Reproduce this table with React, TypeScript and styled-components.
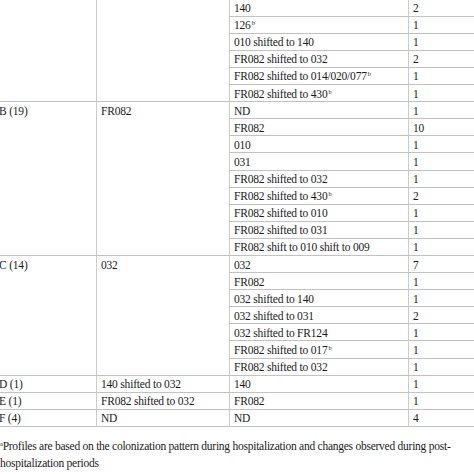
import styled, { createGlobalStyle } from 'styled-components';

const GlobalStyle = createGlobalStyle`
  html, body {
    margin: 0;
    padding: 0;
    background: #fff;
    overflow: hidden;
  }
  body {
    font-family: 'Liberation Serif', 'Times New Roman', serif;
    color: #1c1a1a;
  }
`;

const Page = styled.div`
  width: 474px;
  height: 474px;
  overflow: hidden;
`;

const TableWrap = styled.div`
  margin-left: -5px;
  margin-top: -0.4px;
  width: 520px;
`;

const Table = styled.table`
  border-collapse: separate;
  border-spacing: 0;
  table-layout: fixed;
  width: 520px;
  font-size: 11.5px;
  letter-spacing: -0.2px;
`;

const Cell = styled.td<{ $first?: boolean; $group?: boolean }>`
  padding: 1.5px 4px 0;
  line-height: 14.6px;
  border-bottom: 1px solid #c2c2c2;
  border-left: ${(p) => (p.$first ? 'none' : '1px solid #cbcbcb')};
  vertical-align: ${(p) => (p.$group ? 'top' : 'middle')};
  white-space: nowrap;
  overflow: hidden;
`;

const Mark = styled.sup`
  font-size: 6.5px;
  vertical-align: 4px;
  line-height: 0;
  margin-left: 1px;
`;

const Footnote = styled.p`
  margin: 11px 0 0;
  width: 456px;
  font-size: 11.5px;
  letter-spacing: -0.25px;
  line-height: 17px;
`;

const FootMark = styled.sup`
  font-size: 6.5px;
  vertical-align: 4px;
  line-height: 0;
`;

type Profile = { label: string; mark?: boolean; n: number };
type Group = { name?: string; origin?: string; rows: Profile[] };

const groups: Group[] = [
  {
    rows: [
      { label: '140', n: 2 },
      { label: '126', mark: true, n: 1 },
      { label: '010 shifted to 140', n: 1 },
      { label: 'FR082 shifted to 032', n: 2 },
      { label: 'FR082 shifted to 014/020/077', mark: true, n: 1 },
      { label: 'FR082 shifted to 430', mark: true, n: 1 },
    ],
  },
  {
    name: 'B (19)',
    origin: 'FR082',
    rows: [
      { label: 'ND', n: 1 },
      { label: 'FR082', n: 10 },
      { label: '010', n: 1 },
      { label: '031', n: 1 },
      { label: 'FR082 shifted to 032', n: 1 },
      { label: 'FR082 shifted to 430', mark: true, n: 2 },
      { label: 'FR082 shifted to 010', n: 1 },
      { label: 'FR082 shifted to 031', n: 1 },
      { label: 'FR082 shift to 010 shift to 009', n: 1 },
    ],
  },
  {
    name: 'C (14)',
    origin: '032',
    rows: [
      { label: '032', n: 7 },
      { label: 'FR082', n: 1 },
      { label: '032 shifted to 140', n: 1 },
      { label: '032 shifted to 031', n: 2 },
      { label: '032 shifted to FR124', n: 1 },
      { label: 'FR082 shifted to 017', mark: true, n: 1 },
      { label: 'FR082 shifted to 032', n: 1 },
    ],
  },
  { name: 'D (1)', origin: '140 shifted to 032', rows: [{ label: '140', n: 1 }] },
  { name: 'E (1)', origin: 'FR082 shifted to 032', rows: [{ label: 'FR082', n: 1 }] },
  { name: 'F (4)', origin: 'ND', rows: [{ label: 'ND', n: 4 }] },
];

export default function App() {
  return (
    <Page>
      <GlobalStyle />
      <TableWrap>
        <Table>
          <colgroup>
            <col style={{ width: 101 }} />
            <col style={{ width: 133 }} />
            <col style={{ width: 179 }} />
            <col style={{ width: 107 }} />
          </colgroup>
          <tbody>
            {groups.map((g, gi) =>
              g.rows.map((r, ri) => (
                <tr key={`${gi}-${ri}`}>
                  {ri === 0 && (
                    <>
                      <Cell $first $group rowSpan={g.rows.length}>
                        {g.name}
                      </Cell>
                      <Cell $group rowSpan={g.rows.length}>
                        {g.origin}
                      </Cell>
                    </>
                  )}
                  <Cell>
                    {r.label}
                    {r.mark && <Mark>b</Mark>}
                  </Cell>
                  <Cell>{r.n}</Cell>
                </tr>
              ))
            )}
          </tbody>
        </Table>
      </TableWrap>
      <Footnote>
        <FootMark>a</FootMark>Profiles are based on the colonization pattern during hospitalization and changes
        observed during post-hospitalization periods
        <br />
        <FootMark>b</FootMark>New profiles not previously described
      </Footnote>
    </Page>
  );
}
